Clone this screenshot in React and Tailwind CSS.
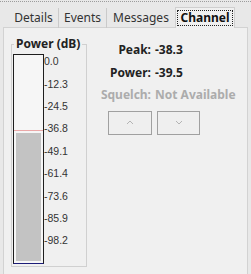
import React from 'react';

const ticks = ['0.0', '-12.3', '-24.5', '-36.8', '-49.1', '-61.4', '-73.6', '-85.9', '-98.2'];

const Chevron = ({ up }) => (
  <svg width="8" height="5" viewBox="0 0 8 5" fill="none">
    <polyline
      points={up ? '1,4 4,1 7,4' : '1,1 4,4 7,1'}
      stroke="#b4b4b4"
      strokeWidth="1"
    />
  </svg>
);

export default function App() {
  return (
    <div
      className="w-[251px] h-[274px] overflow-hidden bg-[#e8e8e8]"
      style={{ fontFamily: '"Noto Sans", "Open Sans", sans-serif' }}
    >
      {/* dotted focus edge on top */}
      <div className="mt-px border-t border-dotted border-[#9c9c9c]" />

      {/* Tab strip */}
      <div className="mt-[5px] pl-[9px] flex items-end h-[21px]">
        <div className="w-[50px] h-[20px] flex items-center justify-center border-r border-[#cacaca] text-[12px] text-[#333]">
          Details
        </div>
        <div className="w-[48px] h-[20px] flex items-center justify-center border-r border-[#cacaca] text-[12px] text-[#333]">
          Events
        </div>
        <div className="w-[68px] h-[20px] flex items-center justify-center text-[12px] text-[#333]">
          Messages
        </div>
        <div className="relative z-10 w-[60px] h-[21px] bg-[#f0f0f0] border-x border-t border-[#cfcfcf] flex items-start justify-center pt-[3px]">
          <span className="px-[2px] leading-[14px] outline-1 outline-dotted outline-[#222] text-[12px] font-bold text-[#111]">
            Channel
          </span>
        </div>
      </div>

      {/* Panel */}
      <div className="-mt-px mx-[3px] h-[260px] bg-[#f0f0f0] border border-[#d2d2d2] pt-[8px] pl-[7px] flex">
        {/* Power group */}
        <fieldset className="w-[76px] h-[231px] border border-[#d0d0d0] flex items-start">
          <legend className="ml-[2px] px-[2px] text-[12px] leading-[16px] font-bold text-[#222]">
            Power (dB)
          </legend>
          <div className="ml-px mt-[2px] w-[31px] h-[210px] border border-[#1e1e1e] border-b-[#1c1c78] bg-[#f6f6f6] flex flex-col">
            <div className="h-[75px]" />
            <div className="h-px bg-[#eba8a8]" />
            <div className="px-[2px] py-[2px] h-[132px]">
              <div className="h-full bg-[#c3c3c3]" />
            </div>
          </div>
          <div
            className="-mt-[1px] flex flex-col text-[10.5px] text-[#333]"
            style={{ fontFamily: '"Liberation Sans", Arial, sans-serif' }}
          >
            {ticks.map((t) => (
              <div key={t} className="h-[22.4px] flex items-center">
                {t}
              </div>
            ))}
          </div>
        </fieldset>

        {/* Readouts */}
        <div className="ml-[5px] pt-[3px] flex flex-col">
          <div className="grid grid-cols-[59px_auto] gap-x-[4px] text-[12px] font-bold">
            <div className="h-[22.5px] flex items-center justify-end text-[#222]">Peak:</div>
            <div className="h-[22.5px] flex items-center text-[#222]">-38.3</div>
            <div className="h-[22.5px] flex items-center justify-end text-[#222]">Power:</div>
            <div className="h-[22.5px] flex items-center text-[#222]">-39.5</div>
            <div className="h-[22.5px] flex items-center justify-end text-[#acacac]">Squelch:</div>
            <div className="h-[22.5px] flex items-center text-[#acacac] whitespace-nowrap">Not Available</div>
          </div>
          <div className="mt-[4px] ml-[16px] flex gap-[5px]">
            <button className="w-[44px] h-[24px] border border-[#a0a0a0] bg-[#efefef] flex items-center justify-center">
              <Chevron up />
            </button>
            <button className="w-[43px] h-[24px] border border-[#a0a0a0] bg-[#efefef] flex items-center justify-center">
              <Chevron />
            </button>
          </div>
        </div>
      </div>
    </div>
  );
}
